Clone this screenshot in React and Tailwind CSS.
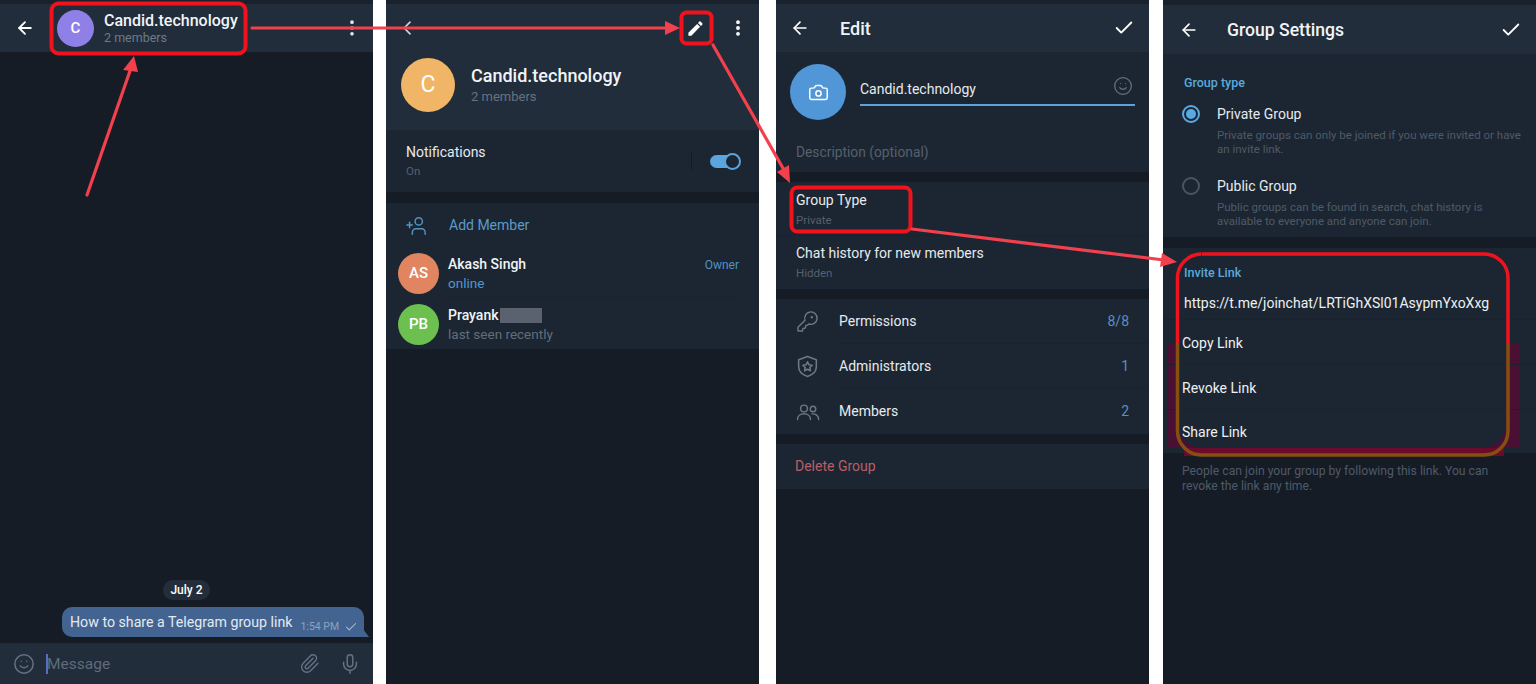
import { ArrowLeft, Camera, Check, EllipsisVertical, KeyRound, Mic, Paperclip, Smile, UserPlus } from 'lucide-react'

function StatusStrip() {
  return <div className="h-[4px] shrink-0 bg-[#19212c]" />
}

function Panel({ children, className = '' }) {
  return <div className={`flex h-[684px] w-[373px] shrink-0 flex-col overflow-hidden bg-[#151c26] ${className}`}>{children}</div>
}

function ChatPanel() {
  return (
    <Panel>
      <StatusStrip />
      <div className="flex h-[48px] shrink-0 items-center bg-[#212d3b] pl-[15px] pr-[11px]">
        <ArrowLeft className="h-5 w-5 text-white" strokeWidth={2.2} />
        <div className="ml-[22px] flex h-[37px] w-[37px] items-center justify-center rounded-full bg-[#8f80e8] text-[15px] font-medium text-white">C</div>
        <div className="ml-[10px] flex-1">
          <div className="text-[16px] font-medium leading-[20px] text-[#f1f4f7]">Candid.technology</div>
          <div className="text-[12.5px] leading-[14px] text-[#6f7a88]">2 members</div>
        </div>
        <EllipsisVertical className="h-5 w-5 text-[#e4e8ec]" strokeWidth={2.4} />
      </div>
      <div className="flex flex-1 flex-col justify-end pb-[6px]">
        <div className="mb-[7px] self-center rounded-full bg-[#242e3a] px-[7px] py-[2px] text-[12px] font-medium leading-[16px] text-white">July 2</div>
        <div className="relative ml-[62px] mr-[9px] flex h-[30px] items-center whitespace-nowrap rounded-[10px] rounded-br-none bg-[#436491] pl-[8px]">
          <span className="shrink-0 pt-[1px] text-[14.2px] text-[#e3eaf2]">How to share a Telegram group link</span>
          <span className="ml-[8px] mt-[10px] shrink-0 text-[10.5px] text-[#8aa2c0]">1:54 PM</span>
          <Check className="ml-[5px] mt-[10px] h-[14px] w-[14px] shrink-0 text-[#a9bdd6]" strokeWidth={1.8} />
          {/* bubble tail */}
          <svg viewBox="0 0 6 8" className="absolute -right-[5px] bottom-0 h-[8px] w-[6px] fill-[#436491]">
            <path d="M0 0 6 8H0z" />
          </svg>
        </div>
      </div>
      <div className="flex h-[41px] shrink-0 items-center bg-[#212d3b] pl-[13px] pr-[12px]">
        <Smile className="h-[22px] w-[22px] text-[#667281]" strokeWidth={1.6} />
        <div className="ml-[11px] h-[20px] w-[2px] bg-[#5a6fc0]" />
        <span className="-ml-[1px] flex-1 pt-[3px] text-[15.5px] text-[#5f6b78]">Message</span>
        <Paperclip className="h-[21px] w-[21px] text-[#667281]" strokeWidth={1.6} />
        <Mic className="ml-[19px] h-[22px] w-[22px] text-[#667281]" strokeWidth={1.6} />
      </div>
    </Panel>
  )
}

function Member({ initials, color, name, status, statusColor, owner, redacted, border, height, textPad }) {
  return (
    <div className={`flex items-center pl-[12px] pr-[20px] ${height}`}>
      <div className={`flex h-[41px] w-[41px] shrink-0 items-center justify-center rounded-full text-[15px] font-medium text-white ${color}`}>{initials}</div>
      <div className={`ml-[9px] flex h-full flex-1 items-center ${border ? 'border-b border-[#192230]' : ''}`}>
        <div className={`flex-1 ${textPad}`}>
          <div className="flex items-center text-[14px] font-medium leading-[19px] text-[#f1f4f7]">
            {name}
            {redacted && <span className="ml-[2px] h-[15px] w-[42px] bg-[#5a6270]" />}
          </div>
          <div className={`text-[13.5px] leading-[19px] ${statusColor}`}>{status}</div>
        </div>
        {owner && <span className="mb-[15px] text-[12px] text-[#4f92c4]">Owner</span>}
      </div>
    </div>
  )
}

function ProfilePanel() {
  return (
    <Panel>
      <StatusStrip />
      <div className="h-[126px] shrink-0 bg-[#212d3b]">
        <div className="flex h-[48px] items-center pl-[14px] pr-[11px]">
          <ArrowLeft className="h-5 w-5 text-[#cfd5db]" strokeWidth={2} />
          <div className="flex-1" />
          <svg viewBox="0 0 24 24" className="mr-[23px] h-[19px] w-[19px] fill-white">
            <path d="M3 17.25V21h3.75L17.81 9.94l-3.75-3.75L3 17.25zM20.71 7.04c.39-.39.39-1.02 0-1.41l-2.34-2.34c-.39-.39-1.02-.39-1.41 0l-1.83 1.83 3.75 3.75 1.83-1.83z" />
          </svg>
          <EllipsisVertical className="h-5 w-5 text-white" strokeWidth={2.6} />
        </div>
        <div className="mt-[6px] flex items-center pl-[15px]">
          <div className="flex h-[54px] w-[54px] items-center justify-center rounded-full bg-[#f0b566] text-[23px] text-white">C</div>
          <div className="mb-[2px] ml-[16px]">
            <div className="text-[18px] font-medium leading-[24px] text-[#f1f4f7]">Candid.technology</div>
            <div className="mt-[1px] text-[13px] leading-[16px] text-[#667281]">2 members</div>
          </div>
        </div>
      </div>
      <div className="flex h-[62px] shrink-0 items-center bg-[#1c2632] pl-[20px] pr-[19px]">
        <div className="flex-1">
          <div className="text-[14px] leading-[20px] text-[#e6eaee]">Notifications</div>
          <div className="text-[11.5px] leading-[18px] text-[#55606d]">On</div>
        </div>
        <div className="mr-[18px] h-[18px] w-px bg-[#141b24]" />
        <div className="relative h-[13px] w-[30px] rounded-full bg-[#5ba4dc]">
          <div className="absolute -right-[1px] -top-[2px] h-[17px] w-[17px] rounded-full border-2 border-[#5ba4dc] bg-[#1c2632]" />
        </div>
      </div>
      <div className="mt-[11px] h-[146px] shrink-0 bg-[#1c2632]">
        <div className="flex h-[45px] items-center pl-[19px]">
          <UserPlus className="h-[22px] w-[22px] -scale-x-100 text-[#5792bd]" strokeWidth={1.6} />
          <span className="ml-[22px] text-[14px] text-[#5b9bc9]">Add Member</span>
        </div>
        <Member initials="AS" color="bg-[#e08560]" name="Akash Singh" status="online" statusColor="text-[#4f97d1]" owner border height="h-[50px]" textPad="pt-[2px]" />
        <Member initials="PB" color="bg-[#6cc04f]" name="Prayank" status="last seen recently" statusColor="text-[#626d7a]" redacted height="h-[51px] pt-[2px]" textPad="pt-[1px]" />
      </div>
    </Panel>
  )
}

function TextRow({ title, sub, border, height }) {
  return (
    <div className={`flex flex-col justify-center pl-[20px] ${height} ${border ? 'border-b border-[#192230]' : ''}`}>
      <div className="text-[14px] leading-[20px] text-[#e6eaee]">{title}</div>
      <div className="text-[11.5px] leading-[20px] text-[#55606d]">{sub}</div>
    </div>
  )
}

function ShieldStar() {
  return (
    <svg viewBox="0 0 24 24" fill="none" stroke="currentColor" strokeWidth="1.5" strokeLinejoin="round" className="h-[25px] w-[25px] shrink-0 text-[#6d7885]">
      <path d="M12 2.5 3.5 5.5v6.5c0 4.7 3.5 8 8.5 9.5 5-1.5 8.5-4.8 8.5-9.5V5.5z" />
      <path d="m12 7.5 1.4 2.9 3.1.4-2.3 2.2.6 3.1-2.8-1.5-2.8 1.5.6-3.1-2.3-2.2 3.1-.4z" />
    </svg>
  )
}

function TwoPeople() {
  return (
    <svg viewBox="0 0 24 24" fill="none" stroke="currentColor" strokeWidth="1.4" strokeLinecap="round" className="h-[24px] w-[24px] shrink-0 text-[#6d7885]">
      <circle cx="8" cy="8.5" r="3.4" />
      <circle cx="17" cy="9" r="2.8" />
      <path d="M1.5 19.5c0-3.6 2.9-5.7 6.5-5.7s6.5 2.1 6.5 5.7" />
      <path d="M16 13.9c3.6-.3 6.6 1.8 6.6 5.6" />
    </svg>
  )
}

function SettingRow({ icon, label, value, border }) {
  return (
    <div className="flex h-[45px] items-center pl-[20px]">
      <div className="flex w-[23px] justify-center">{icon}</div>
      <div className={`ml-[20px] flex h-full flex-1 items-center pr-[20px] ${border ? 'border-b border-[#192230]' : ''}`}>
        <span className="flex-1 text-[14px] text-[#e6eaee]">{label}</span>
        <span className="text-[14px] text-[#5b8fc4]">{value}</span>
      </div>
    </div>
  )
}

function EditPanel() {
  return (
    <Panel>
      <StatusStrip />
      <div className="flex h-[48px] shrink-0 items-center bg-[#212d3b] pl-[14px] pr-[14px]">
        <ArrowLeft className="h-5 w-5 text-white" strokeWidth={2} />
        <span className="ml-[30px] flex-1 text-[18px] font-medium text-[#f1f4f7]">Edit</span>
        <Check className="h-[22px] w-[22px] text-white" strokeWidth={2} />
      </div>
      <div className="h-[120px] shrink-0 bg-[#1c2632]">
        <div className="flex items-start pl-[14px] pr-[14px] pt-[12px]">
          <div className="flex h-[56px] w-[56px] shrink-0 items-center justify-center rounded-full bg-[#5197d8]">
            <Camera className="h-[21px] w-[21px] text-white" strokeWidth={1.7} />
          </div>
          <div className="ml-[14px] flex h-[42px] flex-1 items-start border-b-2 border-[#5ba4d9]">
            <span className="mt-[15px] flex-1 text-[14px] leading-[20px] text-[#e6eaee]">Candid.technology</span>
            <Smile className="mr-[2px] mt-[12px] h-[20px] w-[20px] text-[#667281]" strokeWidth={1.5} />
          </div>
        </div>
        <div className="mt-[22px] pl-[20px] text-[13.8px] leading-[20px] text-[#55606d]">Description (optional)</div>
      </div>
      <div className="mt-[10px] shrink-0 bg-[#1c2632]">
        <TextRow title="Group Type" sub="Private" border height="h-[54px] pt-[3px]" />
        <TextRow title="Chat history for new members" sub="Hidden" height="h-[53px] pt-[1px]" />
      </div>
      <div className="mt-[10px] shrink-0 bg-[#1c2632]">
        <SettingRow icon={<KeyRound className="h-[23px] w-[23px] text-[#6d7885]" strokeWidth={1.5} />} label="Permissions" value="8/8" border />
        <SettingRow icon={<ShieldStar />} label="Administrators" value="1" border />
        <SettingRow icon={<TwoPeople />} label="Members" value="2" />
      </div>
      <div className="mt-[10px] flex h-[45px] shrink-0 items-center bg-[#1c2632] pl-[19px] text-[14px] text-[#b85f68]">Delete Group</div>
    </Panel>
  )
}

function Radio({ active, title, lines }) {
  return (
    <div className="flex pl-[19px]">
      <div className={`mt-[2px] flex h-[18px] w-[18px] shrink-0 items-center justify-center rounded-full border-2 ${active ? 'border-[#5ba9e4]' : 'border-[#4a5561]'}`}>
        {active && <div className="h-[10px] w-[10px] rounded-full bg-[#5ba9e4]" />}
      </div>
      <div className="ml-[17px]">
        <div className="text-[14px] leading-[22px] text-[#e6eaee]">{title}</div>
        <div className="mt-[3px] whitespace-nowrap text-[11.5px] leading-[14px] text-[#4f5a67]">
          {lines.map(line => <div key={line}>{line}</div>)}
        </div>
      </div>
    </div>
  )
}

function LinkRow({ label, border }) {
  return (
    <div className={`relative z-10 flex h-[45px] items-center pl-[19px] text-[14px] text-[#eef1f4] ${border ? 'border-b border-[#192230] pt-[3px]' : ''}`}>{label}</div>
  )
}

function SettingsPanel() {
  return (
    <Panel>
      <div className="h-[5px] shrink-0 bg-[#19212c]" />
      <div className="flex h-[49px] shrink-0 items-center bg-[#212d3b] pl-[16px] pr-[14px]">
        <ArrowLeft className="h-5 w-5 text-white" strokeWidth={2} />
        <span className="ml-[28px] flex-1 pt-[1px] text-[17.6px] font-medium text-[#f1f4f7]">Group Settings</span>
        <Check className="h-[22px] w-[22px] text-white" strokeWidth={2} />
      </div>
      <div className="h-[183px] shrink-0 bg-[#1c2632] pt-[21px]">
        <div className="pl-[21px] text-[12.5px] font-medium leading-[16px] text-[#5aa9dc]">Group type</div>
        <div className="mt-[12px]">
          <Radio active title="Private Group" lines={['Private groups can only be joined if you were invited or have', 'an invite link.']} />
        </div>
        <div className="mt-[19px]">
          <Radio title="Public Group" lines={['Public groups can be found in search, chat history is', 'available to everyone and anyone can join.']} />
        </div>
      </div>
      <div className="relative mt-[11px] h-[205px] shrink-0 bg-[#1c2632]">
        {/* magenta smear round the lower half of the hand drawn box */}
        <div className="absolute left-[5px] top-[96px] h-[104px] w-[352px] bg-[#4a1033]" />
        <div className="absolute left-[15px] top-[6px] h-[194px] w-[328px] rounded-[24px] bg-[#1c2632]" />
        <div className="absolute left-[21px] top-[200px] h-[8px] w-[320px] bg-[#6b0a2d]" />
        <div className="relative z-10 h-[72px] border-b border-[#192230] pl-[21px] pt-[17px]">
          <div className="text-[12.5px] font-medium leading-[16px] text-[#5aa9dc]">Invite Link</div>
          <div className="mt-[12px] text-[14px] leading-[20px] text-[#eef1f4]">https://t.me/joinchat/LRTiGhXSl01AsypmYxoXxg</div>
        </div>
        <LinkRow label="Copy Link" border />
        <LinkRow label="Revoke Link" border />
        <LinkRow label="Share Link" />
      </div>
      <div className="mt-[11px] pl-[19px] text-[12.2px] leading-[15px] text-[#4f5a67]">
        <div>People can join your group by following this link. You can</div>
        <div>revoke the link any time.</div>
      </div>
    </Panel>
  )
}

function Annotations() {
  const red = '#f0131e'
  const arrow = '#f2414c'
  return (
    <svg viewBox="0 0 1536 684" className="pointer-events-none absolute left-0 top-0 z-20 h-[684px] w-[1536px]" fill="none">
      <rect x="51.5" y="3.5" width="194" height="50" rx="7" stroke={red} strokeWidth="4" />
      <rect x="681.5" y="12.5" width="30" height="31" rx="5" stroke={red} strokeWidth="4" />
      <rect x="791.5" y="187.5" width="119" height="44" rx="6" stroke={red} strokeWidth="4" />
      <path d="M1202 254H1484a24 24 0 0 1 24 24V343M1177.500 343V278a24 24 0 0 1 24-24" stroke={red} strokeWidth="3.500" />
      <path d="M1177.500 343V431a24 24 0 0 0 24 24H1484a24 24 0 0 0 24-24V343" stroke="#85500f" strokeWidth="3.500" />
      <g stroke={arrow} strokeWidth="3.2" strokeLinecap="round">
        <path d="M87 195 131 68" />
        <path d="M252 28H668" />
        <path d="M713 45 784 170" />
        <path d="M912 229 1164 260" />
      </g>
      <g fill={arrow}>
        <path d="M134 56 123 70 138 72z" />
        <path d="M680 28 665 21V35z" />
        <path d="M790 183 777 172 789 165z" />
        <path d="M1177 262 1162 253 1160 267z" />
      </g>
    </svg>
  )
}

export default function App() {
  return (
    <div className="relative h-[684px] w-[1536px] overflow-hidden bg-white font-['Roboto',sans-serif]">
      <div className="flex">
        <ChatPanel />
        <div className="w-[13px] shrink-0" />
        <ProfilePanel />
        <div className="w-[17px] shrink-0" />
        <EditPanel />
        <div className="w-[14px] shrink-0" />
        <SettingsPanel />
      </div>
      <Annotations />
    </div>
  )
}
